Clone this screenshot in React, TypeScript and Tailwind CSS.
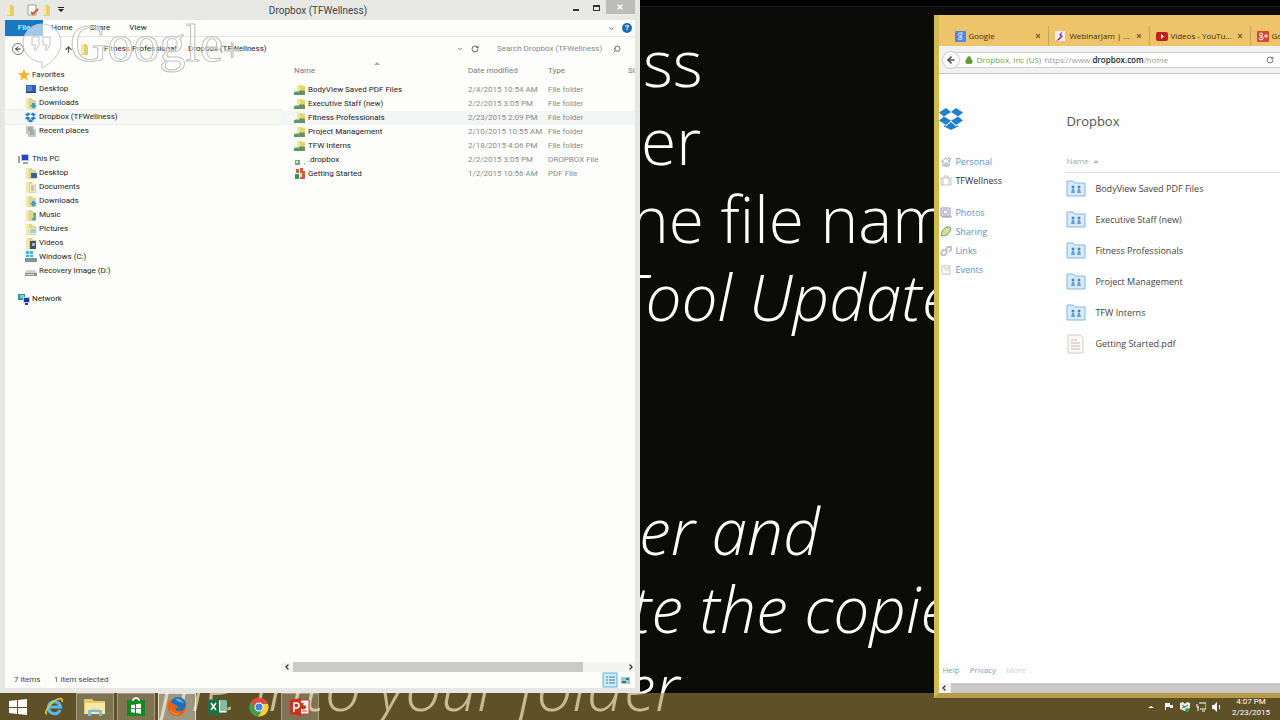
import React from "react";
import { ArrowLeft, ArrowUp, ChevronDown, ChevronLeft, ChevronRight, RotateCw, Search, Lock, X } from "lucide-react";

const slideLines = [
  { text: "ss", pad: "pl-[643px]" },
  { text: "er", pad: "pl-[641px]" },
  { text: "he file name", pad: "pl-[631px]" },
  { text: "Tool Updates", pad: "pl-[614px]", italic: true },
  { text: "", pad: "" },
  { text: "", pad: "" },
  { text: "er and", pad: "pl-[639px]", italic: true },
  { text: "te the copied", pad: "pl-[631px]", italic: true },
  { text: "file into your folder", pad: "pl-[159px]", italic: true },
];

const navGroups = [
  {
    title: "Favorites",
    icon: "star",
    items: [
      { name: "Desktop", icon: "desktop" },
      { name: "Downloads", icon: "downloads" },
      { name: "Dropbox (TFWellness)", icon: "dropbox" },
      { name: "Recent places", icon: "recent" },
    ],
  },
  {
    title: "This PC",
    icon: "pc",
    items: [
      { name: "Desktop", icon: "folderBlue" },
      { name: "Documents", icon: "documents" },
      { name: "Downloads", icon: "downloads" },
      { name: "Music", icon: "music" },
      { name: "Pictures", icon: "pictures" },
      { name: "Videos", icon: "videos" },
      { name: "Windows (C:)", icon: "driveC" },
      { name: "Recovery Image (D:)", icon: "driveD" },
    ],
  },
  { title: "Network", icon: "network", items: [] },
];

const files = [
  { name: "BodyView Saved PDF Files", date: "2/4/2015 10:54 AM", type: "File folder", icon: "shared" },
  { name: "Executive Staff (new)", date: "2/2/2015 3:05 PM", type: "File folder", icon: "shared" },
  { name: "Fitness Professionals", date: "2/23/2015 2:09 PM", type: "File folder", icon: "shared" },
  { name: "Project Management", date: "2/10/2015 10:55 AM", type: "File folder", icon: "shared" },
  { name: "TFW Interns", date: "2/18/2015 4:06 PM", type: "File folder", icon: "shared" },
  { name: ".dropbox", date: "2/2/2015 3:05 PM", type: "DROPBOX File", icon: "dotfile" },
  { name: "Getting Started", date: "1/2/2015 10:56 AM", type: "PDF File", icon: "pdf" },
];

const tabs = [
  { name: "Google", icon: "google" },
  { name: "WebinarJam | ...", icon: "webinar" },
  { name: "Videos - YouTu...", icon: "youtube" },
  { name: "Google+", icon: "gplus" },
];

const webFiles = [
  "BodyView Saved PDF Files",
  "Executive Staff (new)",
  "Fitness Professionals",
  "Project Management",
  "TFW Interns",
  "Getting Started.pdf",
];

const DropboxLogo = ({ className }: { className: string }) => (
  <svg viewBox="0 0 24 22" className={className} fill="#1f7fd0">
    <path d="M7 0 0 4.6l4.9 3.9L12 4.1z" />
    <path d="M17 0l7 4.6-4.9 3.9L12 4.1z" />
    <path d="M0 12.4 7 17l5-4.2-7.1-4.3z" />
    <path d="M24 12.4 17 17l-5-4.2 7.1-4.3z" />
    <path d="M7 18.2 12 14l5 4.2 2-1.3v1.5L12 22l-7-3.6v-1.5z" />
  </svg>
);

const FolderBase = () => (
  <>
    <path d="M1 1h6l1 2h3v9H1z" fill="#dfd68a" />
    <path d="M1 1h3v11H1z" fill="#eee7a8" />
  </>
);

const SmallIcon = ({ name }: { name: string }) => (
  <svg viewBox="0 0 12 12" className="size-3 shrink-0">
    {name === "star" && <path d="M6 0l1.7 4 4.3.3-3.3 2.8 1 4.4L6 9.2l-3.700 2.300 1-4.400L0 4.300 4.300 4z" fill="#efb52f" />}
    {name === "desktop" && (
      <>
        <path d="M1 2h10v8H1z" fill="#2f62a8" />
        <path d="M2 3h5v5H2z" fill="#5186c4" />
        <path d="M1 9h10v1H1z" fill="#24406e" />
      </>
    )}
    {name === "folder" && (
      <>
        <path d="M2 1h5l2 2v9H2z" fill="#e3d06a" />
        <path d="M2 1h3v10H2z" fill="#f4eaa4" />
      </>
    )}
    {name === "downloads" && (
      <>
        <FolderBase />
        <path d="M7 6h3v2h2l-3.500 4L5 8h2z" fill="#3c9ccc" />
      </>
    )}
    {name === "recent" && (
      <>
        <path d="M1 1h8v3h2v8H3V9H1z" fill="#c4c6c6" />
        <path d="M3 3h4M3 5h5M5 7h4M5 9h4" stroke="#84898b" />
      </>
    )}
    {name === "pc" && (
      <>
        <path d="M3 1h8v7H3z" fill="#b8c4d8" />
        <path d="M4 2h6v5H4z" fill="#2544c8" />
        <path d="M0 3h2v7H0zM5 9h5v2H5z" fill="#9aa6ac" />
      </>
    )}
    {name === "folderBlue" && (
      <>
        <FolderBase />
        <path d="M6 6h6v5H6z" fill="#3e6296" />
      </>
    )}
    {name === "documents" && (
      <>
        <FolderBase />
        <path d="M5 3h5v8H5z" fill="#ebe9d2" />
        <path d="M6 5h3M6 7h3M6 9h3" stroke="#a8a77e" />
      </>
    )}
    {name === "music" && (
      <>
        <FolderBase />
        <path d="M8 4h3v6c0 2-4 2-4 0 0-1 1-1.500 2-1.500z" fill="#54a89a" />
      </>
    )}
    {name === "pictures" && (
      <>
        <FolderBase />
        <path d="M4 5h8v6H4z" fill="#e6ecec" />
        <path d="M5 7h6M5 9h6" stroke="#83a8a4" />
      </>
    )}
    {name === "videos" && (
      <>
        <FolderBase />
        <path d="M5 4h6v8H5z" fill="#474f5e" />
        <path d="M7 6h3v3H7z" fill="#9fb6cf" />
      </>
    )}
    {name === "driveC" && (
      <>
        <path d="M1 0h3v3H1zM5 0h3v3H5zM1 4h3v2H1zM5 4h3v2H5z" fill="#35b6dc" />
        <path d="M0 7h12v4H0z" fill="#7f9297" />
      </>
    )}
    {name === "driveD" && (
      <>
        <path d="M2 5h8l2 3v3H0V8z" fill="#cfd1d1" />
        <path d="M0 8h12v3H0z" fill="#8d9191" />
        <path d="M1 9h8v1H1z" fill="#d5d8d8" />
      </>
    )}
    {name === "network" && (
      <>
        <path d="M0 1h7v6H0z" fill="#2b97a7" />
        <path d="M2 2h4v3H2z" fill="#7cd0c3" />
        <path d="M5 4h7v6H5z" fill="#c1cde3" />
        <path d="M6 5h5v4H6z" fill="#1f31c6" />
        <path d="M7 10h3v2H7z" fill="#28427d" />
      </>
    )}
    {name === "shared" && (
      <>
        <path d="M3 1h5l1 1h2v8H3z" fill="#dfd870" />
        <path d="M3 1h3v6H3z" fill="#efe99a" />
        <path d="M0 9c0-2 5-2 5 0v2H0z" fill="#4aa35c" />
        <path d="M5 7l2-1 1 1 2-1 1 2v3H5z" fill="#6b8f6a" />
      </>
    )}
    {name === "dotfile" && (
      <>
        <path d="M1 6h5v5H1z" fill="#6fae7d" />
        <path d="M2 7h2v2H2z" fill="#d5efd8" />
        <path d="M10 9h1v2h-1z" fill="#9cc2a3" />
      </>
    )}
    {name === "pdf" && (
      <>
        <path d="M2 1h3v4H2zM6 0h3v11H6zM9 3h2v8H9z" fill="#cf5a46" />
        <path d="M1 6h4v5H1z" fill="#3f9350" />
        <path d="M6 5h2v4H6z" fill="#eed9cf" />
      </>
    )}
  </svg>
);

const NavItem = ({ name, icon }: { name: string; icon: string }) => (
  <li className={name.startsWith("Dropbox") ? "bg-[#f7f7f6] outline outline-[#ececeb]" : ""}>
    <button type="button" className="flex h-[14px] w-full items-center gap-[2px] pl-5 text-left">
      {icon === "dropbox" ? (
        <span className="flex size-3 items-center"><DropboxLogo className="size-[11px]" /></span>
      ) : (
        <SmallIcon name={icon} />
      )}
      {name}
    </button>
  </li>
);

const Watermark = () => (
  <div className="pointer-events-none absolute top-[23px] left-[22px] flex items-start">
    <svg viewBox="0 0 40 46" className="h-[46px] w-10" fill="#ffffff" fillOpacity="0.6" stroke="#c4c4c4">
      <path d="M20 1a19 19 0 1 0 0 38v6c8-4 19-13 19-25A19 19 0 0 0 20 1z" />
      <path d="M10 14h7v8l-3 5h-2l2-5h-4zM21 14h7v8l-3 5h-2l2-5h-4z" />
    </svg>
    <span className="ml-2 font-['Liberation_Serif',serif] text-[52px] leading-[42px] text-white/50 [-webkit-text-stroke:1px_#c0c0c0]">
      Google<span className="text-[32px]">+</span>
    </span>
  </div>
);

const Explorer = () => (
  <section className="absolute top-0 bottom-[27px] left-0 flex w-1/2 flex-col border-x-[5px] border-b-[5px] border-[#e6e6e3] bg-[#fdfefc] font-['Roboto','Noto_Sans',sans-serif] text-[8px] text-[#222]">
    <header className="flex h-5 shrink-0 items-center justify-between bg-[#e8e8e4]">
      <div className="flex w-[120px] items-center gap-[2px]">
        <SmallIcon name="folder" />
        <svg viewBox="0 0 12 12" className="ml-2 size-3">
          <path d="M1 1h8v10H1z" fill="#fff" stroke="#999" />
          <path d="M4 8l2 2 5-5" fill="none" stroke="#d8572c" strokeWidth="2" />
        </svg>
        <SmallIcon name="folder" />
        <svg viewBox="0 0 6 6" className="ml-[3px] size-[6px]"><path d="M0 0h6v1H0zM0 2h6L3 5z" fill="#222" /></svg>
      </div>
      <h1 className="pr-1 text-[10px] text-[#444]">Dropbox (TFWellness)</h1>
      <div className="flex w-[120px] items-start justify-end gap-[14px] self-stretch">
        <button type="button" aria-label="Minimize" className="mt-[9px] h-[2px] w-[6px] bg-[#333]" />
        <button type="button" aria-label="Maximize" className="mt-[5px] h-[6px] w-[7px] border border-t-2 border-[#333]" />
        <button type="button" aria-label="Close" className="-ml-2 flex h-[14px] w-[29px] items-center justify-center bg-[#bcbcbb] text-white">
          <X className="size-2" strokeWidth={4} />
        </button>
      </div>
    </header>
    <nav className="flex h-[17px] shrink-0 items-center border-b border-[#e4e5e4]">
      <button type="button" className="h-4 w-[38px] bg-[#1a78c2] text-white">File</button>
      <button type="button" className="w-[38px]">Home</button>
      <button type="button" className="w-[38px]">Share</button>
      <button type="button" className="w-[38px]">View</button>
      <ChevronDown className="ml-auto size-[7px] text-[#555]" strokeWidth={3} />
      <button type="button" aria-label="Help" className="mr-[3px] ml-[7px] size-[10px] rounded-full bg-[#1b6cb5] text-[8px] leading-[10px] font-bold text-white">?</button>
    </nav>
    <div className="flex h-6 shrink-0 items-center">
      <button type="button" aria-label="Back" className="ml-[7px] flex size-3 items-center justify-center rounded-full border border-[#777]">
        <ArrowLeft className="size-2" strokeWidth={3} />
      </button>
      <ArrowUp className="ml-10 size-[9px] text-[#555]" strokeWidth={3} />
      <span className="ml-[6px]"><SmallIcon name="folder" /></span>
      <ChevronRight className="ml-1 size-[6px] text-[#777]" />
      <span className="ml-[3px] w-[72px] whitespace-nowrap">Fitness Professional</span>
      <ChevronRight className="size-[6px] text-[#777]" />
      <span className="ml-[6px] whitespace-nowrap">Dropbox (TFWellness)</span>
      <ChevronDown className="ml-auto size-[6px] text-[#555]" strokeWidth={3} />
      <RotateCw className="ml-2 size-2 text-[#666]" strokeWidth={3} />
      <input aria-label="Search" placeholder="Search Dropbox (TFWellness)" className="ml-[18px] w-[112px] bg-transparent placeholder:text-[#888]" />
      <Search className="mr-[14px] ml-1 size-2 -scale-x-100 text-[#666]" strokeWidth={3} />
    </div>
    <div className="flex min-h-0 flex-1">
      <aside className="flex w-[276px] shrink-0 flex-col gap-[14px] pt-[7px]">
        {navGroups.map((group) => (
          <div key={group.title}>
            <h2 className="flex h-[14px] items-center gap-[2px] pl-[13px]">
              <SmallIcon name={group.icon} />
              {group.title}
            </h2>
            <ul>
              {group.items.map((item) => (
                <NavItem key={item.name} name={item.name} icon={item.icon} />
              ))}
            </ul>
          </div>
        ))}
      </aside>
      <div className="flex min-w-0 flex-1 flex-col overflow-hidden">
        <svg viewBox="0 0 6 4" className="ml-[93px] h-1 w-[6px] shrink-0"><path d="M0 4l3-3 3 3z" fill="#aaa" /></svg>
        <table className="w-[380px] table-fixed border-collapse text-left whitespace-nowrap">
          <thead>
            <tr className="h-[18px] text-[#777]">
              <th className="w-[187px] p-0 pb-[6px] pl-[13px] font-normal">Name</th>
              <th className="w-20 p-0 pb-[6px] font-normal">Date modified</th>
              <th className="w-20 p-0 pb-[6px] font-normal">Type</th>
              <th className="p-0 pb-[6px] font-normal">Size</th>
            </tr>
          </thead>
          <tbody>
            {files.map((file) => (
              <tr key={file.name} className={file.name.startsWith("Fitness") ? "h-[14px] bg-[#f4f5f5]" : "h-[14px]"}>
                <td className="p-0 pl-[13px]">
                  <span className="flex items-center gap-[2px]">
                    <SmallIcon name={file.icon} />
                    {file.name}
                  </span>
                </td>
                <td className="p-0 text-[#8a8a8a]">{file.date}</td>
                <td className="p-0 text-[#8a8a8a]">{file.type}</td>
                <td className="p-0" />
              </tr>
            ))}
          </tbody>
        </table>
        <div className="mt-auto flex h-[10px] items-center bg-[#f4f4f3]">
          <ChevronLeft className="mx-[2px] size-2 text-[#333]" strokeWidth={4} />
          <div className="h-full w-[290px] bg-[#cacbc9]" />
          <ChevronRight className="ml-auto size-2 text-[#333]" strokeWidth={4} />
        </div>
      </div>
    </div>
    <footer className="flex h-4 shrink-0 items-center pl-[9px] text-[#444]">
      <span className="w-10">7 items</span>
      <span>1 item selected</span>
      <svg viewBox="0 0 32 16" className="mr-[1px] ml-auto h-4 w-8">
        <path d="M1 1h14v14H1z" fill="#cfeaf6" stroke="#5fb0d6" />
        <path d="M4 5h2M4 8h2M4 11h2M7 5h6M7 8h6M7 11h6" stroke="#4a7d9d" />
        <path d="M19 5h9v7h-9z" fill="#9ecbd2" />
        <path d="M20 9h4v2h-4zM24 6h3v2h-3z" fill="#3d7b70" />
      </svg>
    </footer>
  </section>
);

const TabIcon = ({ name }: { name: string }) => (
  <svg viewBox="0 0 12 12" className="size-3 shrink-0">
    {name === "google" && (
      <>
        <rect x="1" y="1" width="11" height="11" rx="1" fill="#4a86e8" />
        <circle cx="6" cy="4.500" r="1.700" fill="none" stroke="#dfe9fb" />
        <path d="M7 3h2M6 6c2 1 3 2 2 3s-4 1-4 0 1-1.500 3-1.500" fill="none" stroke="#dfe9fb" />
      </>
    )}
    {name === "webinar" && (
      <>
        <path d="M0 1h10v10H0z" fill="#f7edf4" />
        <path d="M8 1L4 5l2 1-5 5 3-1 4-4-2-1z" fill="#7c1f78" />
      </>
    )}
    {name === "youtube" && (
      <>
        <rect x="0" y="2" width="12" height="9" rx="2" fill="#c01f1c" />
        <path d="M5 4l3 2.500L5 9z" fill="#fff" />
      </>
    )}
    {name === "gplus" && (
      <>
        <rect x="0" y="1" width="12" height="11" rx="1" fill="#d34836" />
        <circle cx="4" cy="4.500" r="1.500" fill="none" stroke="#fff" />
        <path d="M4 6c2 1 3 2 2 3s-4 1-4 0 1-1.500 3-1.500M9 4v4M7 6h4" fill="none" stroke="#fff" />
      </>
    )}
  </svg>
);

const SideIcon = ({ name }: { name: string }) => (
  <svg viewBox="0 0 12 12" className="size-3 shrink-0" fill="none" stroke="#a5a9ad">
    {name === "Personal" && <path d="M1 6l5-4 4 4M3 5v5h6V5M8 2h2v3M5 10V7h2v3" />}
    {name === "TFWellness" && <path d="M1 3h10v7H1zM4 3V1h4v2M3 3v7M9 3v7" stroke="#c4c4c4" />}
    {name === "Photos" && <path d="M1 1h9v8H1zM3 3h5v4H3zM2 10h10" stroke="#9a8cc0" />}
    {name === "Sharing" && <path d="M1 10l1-5 4-4h4l1 3-4 5z" stroke="#7ba565" fill="#cfdf9a" />}
    {name === "Links" && <path d="M1 8l2-3h3l1 2-2 3H2zM6 4l2-2h3v3L9 7" stroke="#c4c4c4" strokeWidth="2" />}
    {name === "Events" && <path d="M2 2h8v8H2zM4 4h2v3M8 3v4" stroke="#c6c3b8" />}
  </svg>
);

const SideLink = ({ name }: { name: string }) => (
  <a href="#" className={name === "TFWellness" ? "flex items-center gap-[3px] text-[#333]" : "flex items-center gap-[3px] text-[#5c93cc]"}>
    <SideIcon name={name} />
    {name}
  </a>
);

const Firefox = () => (
  <section className="absolute top-[15px] bottom-[22px] left-[73%] flex w-[360px] flex-col overflow-hidden border-b-[5px] border-l-[5px] border-b-[#b89b49] border-l-[#d3b858] bg-[#fdfefd] text-[9px] text-[#444]">
    <div className="flex h-[31px] shrink-0 items-end bg-[#edc46a] pl-[9px]">
      {tabs.map((tab) => (
        <div key={tab.name} className="flex h-5 w-[101px] shrink-0 items-center gap-[2px] border-r border-[#c9a356] pr-[7px] pl-[6px] text-[8px] text-[#3c2e10]">
          <TabIcon name={tab.icon} />
          <span className="flex-1 whitespace-nowrap">{tab.name}</span>
          <X className="size-[6px] shrink-0 text-[#7d6534]" strokeWidth={5} />
        </div>
      ))}
    </div>
    <div className="flex h-7 shrink-0 items-center border-b border-[#c8c9c7] bg-[#f1f1ef] pl-[3px]">
      <button type="button" aria-label="Back" className="z-10 flex size-[18px] shrink-0 items-center justify-center rounded-full border border-[#ccc] bg-[#fafafa]">
        <ArrowLeft className="size-[10px] text-[#555]" strokeWidth={4} />
      </button>
      <div className="-ml-1 flex h-4 flex-1 items-center border border-[#d0d0ce] bg-white pl-2 whitespace-nowrap text-[#999]">
        <Lock className="size-2 fill-[#5f9e2c] text-[#5f9e2c]" strokeWidth={3} />
        <span className="ml-[3px] w-[68px] text-[8px] text-[#6aa83c]">Dropbox, Inc (US)</span>
        <span className="flex-1 text-[8px]">https://www.<b className="font-semibold text-[#222]">dropbox.com</b>/home</span>
        <RotateCw className="mr-[19px] size-2 text-[#777]" strokeWidth={3} />
      </div>
    </div>
    <div className="flex min-h-0 flex-1">
      <aside className="flex w-[127px] shrink-0 flex-col pt-[34px] pl-px">
        <DropboxLogo className="-ml-px h-[22px] w-6" />
        <nav className="mt-[26px] flex flex-col gap-[7px] leading-3">
          <SideLink name="Personal" />
          <SideLink name="TFWellness" />
        </nav>
        <nav className="mt-5 flex flex-col gap-[7px] leading-3">
          <SideLink name="Photos" />
          <SideLink name="Sharing" />
          <SideLink name="Links" />
          <SideLink name="Events" />
        </nav>
        <div className="mt-auto mb-[7px] flex gap-[10px] pl-[2px] text-[8px] text-[#7f9cc4]">
          <a href="#">Help</a>
          <a href="#">Privacy</a>
          <a href="#" className="text-[#cfcfcf]">More</a>
        </div>
      </aside>
      <main className="flex-1 pt-[37px]">
        <h2 className="text-[13px] leading-5 text-[#555]">Dropbox</h2>
        <p className="mt-6 flex h-3 items-center gap-1 text-[8px] text-[#aaa]">
          Name
          <svg viewBox="0 0 6 4" className="h-1 w-[6px]"><path d="M0 4l3-3 3 3z" fill="#bbb" /></svg>
        </p>
        <ul className="mt-[5px] border-t border-[#dcdcdc]">
          {webFiles.map((name) => (
            <li key={name} className="flex h-[31px] items-center gap-[9px]">
              {name.endsWith(".pdf") ? (
                <svg viewBox="0 0 20 20" className="size-5" fill="none">
                  <path d="M2 1h12l3 3v15H2z" fill="#fbf8f8" stroke="#d4cccc" />
                  <path d="M5 6h6M5 9h9M5 12h9M5 15h9" stroke="#cfb8b8" />
                </svg>
              ) : (
                <svg viewBox="0 0 20 20" className="size-5" fill="none">
                  <path d="M1 3V2h6l2 2h10v13H1z" fill="#d6eafa" stroke="#87b6de" />
                  <circle cx="7" cy="8" r="1.500" fill="#4a86b8" />
                  <circle cx="13" cy="8" r="1.500" fill="#4a86b8" />
                  <path d="M5 14l1-4h2l1 4zM11 14l1-4h2l1 4z" fill="#6ba0cc" />
                </svg>
              )}
              {name}
            </li>
          ))}
        </ul>
      </main>
    </div>
    <div className="flex h-[10px] shrink-0 items-center bg-[#c9c7c8]">
      <span className="flex h-full w-3 items-center bg-[#f2f2f2] pl-px"><ChevronLeft className="size-2 text-[#333]" strokeWidth={4} /></span>
    </div>
  </section>
);

const appButton = "flex h-full w-[38px] items-center justify-center";
const openApp = "flex h-full w-[38px] items-center justify-center border border-b-0 border-white/30 bg-white/20";

const Taskbar = () => (
  <footer className="absolute inset-x-0 bottom-0 flex h-[27px] items-center bg-[#9e8741]/57">
    <button type="button" aria-label="Start" className="flex h-full w-[35px] items-center justify-center">
      <svg viewBox="0 0 18 18" className="size-[18px]" fill="#fff">
        <path d="M0 3l8-1v7H0zM9 2l9-1v8H9zM0 10h8v6l-8-1zM9 10h9v7l-9-1z" />
      </svg>
    </button>
    <div className="flex h-full gap-[3px]">
      <button type="button" aria-label="Internet Explorer" className={appButton}>
        <svg viewBox="0 0 20 20" className="size-5" fill="none">
          <path d="M16 13a6 6 0 1 1 .4-3H6" stroke="#55b9ee" strokeWidth="3.200" />
          <path d="M3 17C-1 17 6 5 14 2c4-1 5 0 4 3" stroke="#f0c438" strokeWidth="1.600" />
        </svg>
      </button>
      <button type="button" aria-label="File Explorer" className={openApp}>
        <svg viewBox="0 0 24 20" className="h-5 w-6">
          <path d="M1 2h8l2 2h11v13H1z" fill="#e5c961" />
          <path d="M2 6h20v11H2z" fill="#f7e9a0" />
          <path d="M5 19v-5c0-2 14-2 14 0v5h-3v-4H8v4z" fill="#79bce4" />
        </svg>
      </button>
      <button type="button" aria-label="Store" className={openApp}>
        <svg viewBox="0 0 18 20" className="h-5 w-[18px]">
          <path d="M0 3h18v16H0z" fill="#118a1e" />
          <path d="M6 4c0-4 6-4 6 0" fill="none" stroke="#fff" strokeWidth="1.500" />
          <path d="M4 8l4-.6v3.900H4zM9 7.300l5-.8v4.800H9zM4 12h4v3.800l-4-.6zM9 12h5v4.800l-5-.8z" fill="#fff" />
        </svg>
      </button>
      <button type="button" aria-label="Firefox" className="flex h-full w-[38px] items-center justify-center border border-b-0 border-white/70 bg-white/40">
        <svg viewBox="0 0 20 20" className="size-5">
          <circle cx="11" cy="8" r="8" fill="#1f6fb8" />
          <path d="M8 2c4-1 8 1 9 5-2-2-3-2-5-2z" fill="#55b4e2" />
          <path d="M2 3c-4 9 1 16 8 16 6 0 10-5 9-11-1 4-3 6-7 6-3 0-4-2-3-3l3-1-5-3-2-1z" fill="#e4631b" />
          <path d="M3 12c2 4 6 6 10 4-3 3-9 1-10-4z" fill="#f6b03a" />
        </svg>
      </button>
      <button type="button" aria-label="Excel" className={appButton}>
        <svg viewBox="0 0 20 18" className="h-[18px] w-5">
          <path d="M9 2h10v13H9z" fill="#fff" stroke="#1c7044" />
          <path d="M12 4h6M12 6h6M12 8h6M12 10h6M12 12h6" stroke="#1c7044" />
          <path d="M0 2l11-2v18L0 16z" fill="#1c7044" />
          <path d="M3 5l5 7M8 5l-5 7" stroke="#fff" strokeWidth="1.500" />
        </svg>
      </button>
      <button type="button" aria-label="Chrome" className={appButton}>
        <svg viewBox="0 0 20 20" className="size-5">
          <circle cx="10" cy="10" r="9.500" fill="#dd4b39" />
          <path d="M1.800 5A9.500 9.500 0 0 0 9 19.500l5-7.500-4-1-3 1z" fill="#3fa04c" />
          <path d="M19 7a9.500 9.500 0 0 1-10 12.500L14 12l-1-5z" fill="#f6cf3c" />
          <circle cx="10" cy="10" r="4.500" fill="#fff" />
          <circle cx="10" cy="10" r="3.500" fill="#4285e0" />
        </svg>
      </button>
      <button type="button" aria-label="PowerPoint" className={openApp}>
        <svg viewBox="0 0 20 18" className="h-[18px] w-5">
          <path d="M9 2h10v14H9z" fill="#fff" stroke="#c8351c" />
          <path d="M13 5a3 3 0 1 0 3 3h-3zM12 13h5" fill="#c8351c" stroke="#c8351c" />
          <path d="M0 2l11-2v18L0 16z" fill="#c8351c" />
          <path d="M4 14V5h2.500a2 2 0 0 1 0 5H4" fill="none" stroke="#fff" strokeWidth="1.600" />
        </svg>
      </button>
    </div>
    <div className="ml-auto flex items-center gap-[6px] text-white">
      <svg viewBox="0 0 6 4" className="h-1 w-[6px]"><path d="M0 3l3-2 3 2z" fill="#fff" /></svg>
      <svg viewBox="0 0 10 10" className="ml-1 size-[10px]"><path d="M1 1h1v7H1zM2 1h4v4H2zM6 3h3v3H6z" fill="#fff" /></svg>
      <svg viewBox="0 0 10 10" className="size-[10px]">
        <path d="M0 1l3-1 2 2 2-2 3 1v5l-5 3-5-2z" fill="#e6f3ea" />
        <path d="M2 3l3 2 3-2M2 6l3-1" fill="none" stroke="#50604a" />
        <circle cx="7" cy="8" r="2" fill="#30a850" />
      </svg>
      <svg viewBox="0 0 10 10" className="size-[10px]" fill="none" stroke="#fff"><path d="M3 1h7v6H4M1 2v3h2M2 5v4M6 9h3" /></svg>
      <svg viewBox="0 0 8 10" className="h-[10px] w-2"><path d="M0 3h2l3-3v10L2 7H0zM7 3h1v4H7z" fill="#fff" /></svg>
    </div>
    <time className="mr-[10px] ml-3 text-center font-['Roboto',sans-serif] text-[8px] leading-[11px] text-white">
      4:07 PM
      <br />
      2/23/2015
    </time>
  </footer>
);

const App = () => {
  return (
    <div className="relative h-screen min-h-[480px] w-full overflow-hidden bg-[#0b0b09] font-['Open_Sans','Noto_Sans',sans-serif]">
      <div className="h-[7px] border-b border-[#1c1c1a] bg-black" />
      <div className="pt-[17px] text-[64px] leading-[78px] font-[350] whitespace-nowrap text-white">
        {slideLines.map((line, index) => (
          <p key={index} className={`h-[78px] ${line.pad} ${line.italic ? "italic" : ""}`}>
            {line.text}
          </p>
        ))}
      </div>
      <Explorer />
      <Watermark />
      <Taskbar />
      <Firefox />
    </div>
  );
};

export default App;
